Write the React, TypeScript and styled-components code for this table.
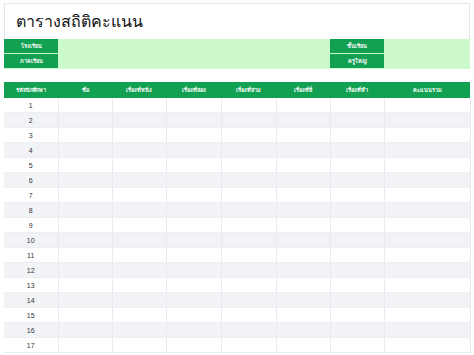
import styled, {createGlobalStyle} from "styled-components";

const GlobalStyle = createGlobalStyle`
  body {
    margin: 0;
    background: #ffffff;
    font-family: "Noto Sans", "Liberation Sans", sans-serif;
    color: #222;
  }
`;

const Page = styled.div`
  width: 466px;
  padding: 3px 4px 0;
`;

const TitleBox = styled.div`
  height: 36px;
  border: 1px solid #e6e6e6;
  border-bottom: none;
  display: flex;
  align-items: center;
  padding-left: 11px;
  box-sizing: border-box;
`;

const Title = styled.h1`
  margin: 0;
  font-size: 16px;
  font-weight: 400;
  color: #111;
`;

const InfoGrid = styled.div`
  display: grid;
  grid-template-columns: 54px 272px 54px 86px;
  background: #cdfacd;
`;

const InfoLabel = styled.div`
  height: 14px;
  background: #12a052;
  color: #fff;
  font-size: 5.5px;
  font-weight: 700;
  display: flex;
  align-items: center;
  justify-content: center;
  border-bottom: 1px solid #cdfacd;
`;

const InfoValue = styled.div`
  height: 14px;
  border-bottom: 1px solid #cdfacd;
`;

const Table = styled.table`
  margin-top: 13px;
  width: 466px;
  border-collapse: collapse;
  table-layout: fixed;
`;

const HeadCell = styled.th<{ $w: number }>`
  width: ${p => p.$w}px;
  height: 16px;
  padding: 0;
  background: #12a052;
  color: #fff;
  font-size: 5.5px;
  font-weight: 700;
  text-align: center;
`;

const Row = styled.tr<{ $alt: boolean }>`
  background: ${p => (p.$alt ? "#f2f3f7" : "#ffffff")};
`;

const Cell = styled.td`
  height: 14px;
  padding: 0;
  border-right: 1px solid #e8eaef;
  border-bottom: 1px solid #eceef2;
  font-family: "Liberation Sans", sans-serif;
  font-size: 7px;
  color: #333;
  text-align: center;
`;

const columns = [
    "รหัสนักศึกษา",
    "ชื่อ",
    "เรื่องที่หนึ่ง",
    "เรื่องที่สอง",
    "เรื่องที่สาม",
    "เรื่องที่สี่",
    "เรื่องที่ห้า",
    "คะแนนรวม",
];

const widths = [54, 54, 54, 55, 55, 54, 54, 86];

function App() {
    const rows = Array.from({length: 17}, (_, i) => i + 1);

    return (
        <>
            <GlobalStyle/>
            <Page>
                <TitleBox>
                    <Title>ตารางสถิติคะแนน</Title>
                </TitleBox>
                <InfoGrid>
                    <InfoLabel>โรงเรียน</InfoLabel>
                    <InfoValue/>
                    <InfoLabel>ชั้นเรียน</InfoLabel>
                    <InfoValue/>
                    <InfoLabel>ภาคเรียน</InfoLabel>
                    <InfoValue/>
                    <InfoLabel>ครูใหญ่</InfoLabel>
                    <InfoValue/>
                </InfoGrid>
                <Table>
                    <thead>
                    <tr>
                        {columns.map((c, i) => (
                            <HeadCell key={c} $w={widths[i]}>{c}</HeadCell>
                        ))}
                    </tr>
                    </thead>
                    <tbody>
                    {rows.map(n => (
                        <Row key={n} $alt={n % 2 === 0}>
                            <Cell>{n}</Cell>
                            {widths.slice(1).map((_, i) => <Cell key={i}/>)}
                        </Row>
                    ))}
                    </tbody>
                </Table>
            </Page>
        </>
    );
}

export default App;
